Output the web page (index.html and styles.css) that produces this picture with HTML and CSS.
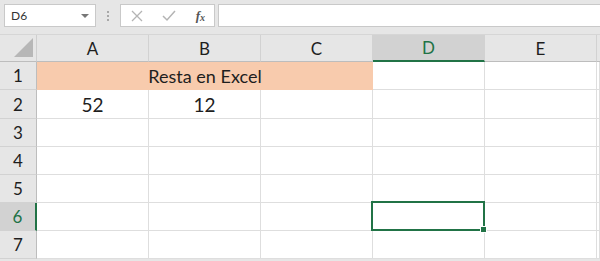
FILE: index.html
```html
<!DOCTYPE html>
<html lang="es">

<head>
  <meta charset="UTF-8">
  <title>Resta en Excel</title>
  <link rel="stylesheet" href="styles.css">
</head>

<body>
  <div class="toolbar">
    <div class="name-box">
      <span>D6</span>
      <span class="arrow"></span>
    </div>
    <div class="dots"><i></i><i></i><i></i></div>
    <div class="fx-box">
      <svg width="12" height="12" viewBox="0 0 12 12">
        <path d="M1 1 L11 11 M11 1 L1 11" stroke="#b4b4b4" stroke-width="1.3" fill="none" />
      </svg>
      <svg width="14" height="12" viewBox="0 0 14 12">
        <path d="M1 6 L5 10 L13 1" stroke="#b4b4b4" stroke-width="1.5" fill="none" />
      </svg>
      <span class="fx">f<sub>x</sub></span>
    </div>
    <div class="formula"></div>
  </div>

  <div class="sheet">
    <!-- header -->
    <div class="corner"><span class="tri"></span></div>
    <div class="col-head">A</div>
    <div class="col-head">B</div>
    <div class="col-head">C</div>
    <div class="col-head active">D</div>
    <div class="col-head">E</div>
    <div class="col-head rest"></div>

    <!-- row 1 -->
    <div class="row-head">1</div>
    <div class="cell title">Resta en Excel</div>
    <div class="cell"></div>
    <div class="cell"></div>
    <div class="cell rest"></div>

    <!-- row 2 -->
    <div class="row-head">2</div>
    <div class="cell num">52</div>
    <div class="cell num">12</div>
    <div class="cell"></div>
    <div class="cell"></div>
    <div class="cell"></div>
    <div class="cell rest"></div>

    <div class="row-head">3</div>
    <div class="cell"></div><div class="cell"></div><div class="cell"></div><div class="cell"></div><div class="cell"></div><div class="cell rest"></div>

    <div class="row-head">4</div>
    <div class="cell"></div><div class="cell"></div><div class="cell"></div><div class="cell"></div><div class="cell"></div><div class="cell rest"></div>

    <div class="row-head">5</div>
    <div class="cell"></div><div class="cell"></div><div class="cell"></div><div class="cell"></div><div class="cell"></div><div class="cell rest"></div>

    <div class="row-head active">6</div>
    <div class="cell"></div><div class="cell"></div><div class="cell"></div><div class="cell selected"></div><div class="cell"></div><div class="cell rest"></div>

    <div class="row-head">7</div>
    <div class="cell"></div><div class="cell"></div><div class="cell"></div><div class="cell"></div><div class="cell"></div><div class="cell rest"></div>
  </div>
</body>

</html>
```

FILE: styles.css
```css
body {
  margin: 0;
  background-color: #e6e6e6;
  font-family: Lato, 'Open Sans', sans-serif;
  color: #1e1e1e;
  width: 600px;
  height: 261px;
  overflow: hidden;
}

/* formula bar */
.toolbar {
  display: flex;
  align-items: flex-start;
  height: 35px;
  padding: 4px 0 0 4px;
  box-sizing: border-box;
  border-bottom: 1px solid #d6d6d6;
}

.name-box {
  width: 92px;
  height: 23px;
  box-sizing: border-box;
  background: #fff;
  border: 1px solid #c9c9c9;
  display: flex;
  align-items: center;
  justify-content: space-between;
  padding: 0 6px 0 6px;
  font-size: 12px;
  color: #333;
}

.arrow {
  width: 0;
  height: 0;
  border-left: 4px solid transparent;
  border-right: 4px solid transparent;
  border-top: 4px solid #777;
}

.dots {
  width: 24px;
  height: 23px;
  display: flex;
  flex-direction: column;
  align-items: center;
  justify-content: center;
  gap: 2px;
}

.dots i {
  width: 2px;
  height: 2px;
  background: #a8a8a8;
}

.fx-box {
  width: 95px;
  height: 23px;
  box-sizing: border-box;
  background: #fff;
  border: 1px solid #c9c9c9;
  display: flex;
  align-items: center;
  justify-content: space-between;
  padding: 0 9px 0 10px;
}

.fx {
  font-family: 'Liberation Serif', serif;
  font-style: italic;
  font-size: 13px;
  color: #555;
  font-weight: bold;
}

.fx sub {
  font-size: 10px;
  vertical-align: -1px;
}

.formula {
  flex: 1;
  height: 23px;
  margin-left: 3px;
  background: #fff;
  border: 1px solid #c9c9c9;
  border-right: none;
  box-sizing: border-box;
}

/* grid */
.sheet {
  display: grid;
  grid-template-columns: 37px 112px 112px 112px 112px 112px 1fr;
  grid-template-rows: 27px 28px 29px repeat(5, 28px);
  background: #fff;
}

.corner {
  background: #e6e6e6;
  border-right: 1px solid #cfcfcf;
  border-bottom: 1px solid #bdbdbd;
  position: relative;
}

.tri {
  position: absolute;
  right: 3px;
  bottom: 4px;
  width: 0;
  height: 0;
  border-left: 19px solid transparent;
  border-bottom: 19px solid #b7b7b7;
}

.col-head {
  background: #e6e6e6;
  border-right: 1px solid #d2d2d2;
  border-bottom: 1px solid #bdbdbd;
  display: flex;
  align-items: center;
  justify-content: center;
  font-size: 17px;
  box-sizing: border-box;
}

.col-head.active {
  background: #d2d2d2;
  color: #217346;
  border-bottom: 2px solid #217346;
}

.col-head.rest {
  border-right: none;
}

.row-head {
  background: #e6e6e6;
  border-right: 1px solid #bdbdbd;
  border-bottom: 1px solid #d2d2d2;
  display: flex;
  align-items: center;
  justify-content: center;
  font-size: 17px;
  box-sizing: border-box;
}

.row-head.active {
  background: #d2d2d2;
  color: #217346;
  border-right: 2px solid #217346;
}

.cell {
  border-right: 1px solid #dedede;
  border-bottom: 1px solid #dedede;
  box-sizing: border-box;
  font-size: 18px;
  display: flex;
  align-items: center;
  justify-content: center;
}

.title {
  grid-column: span 3;
  background: #f8cbad;
  border-right: none;
  border-bottom: 1px solid #f8cbad;
  font-size: 18px;
}

.num {
  font-size: 19px;
}

.selected {
  position: relative;
}

.selected::before {
  content: "";
  position: absolute;
  left: -2px;
  top: -2px;
  right: -1px;
  bottom: -1px;
  border: 2px solid #217346;
}

.selected::after {
  content: "";
  position: absolute;
  right: -3px;
  bottom: -3px;
  width: 5px;
  height: 5px;
  background: #217346;
  border: 1px solid #fff;
}
```
